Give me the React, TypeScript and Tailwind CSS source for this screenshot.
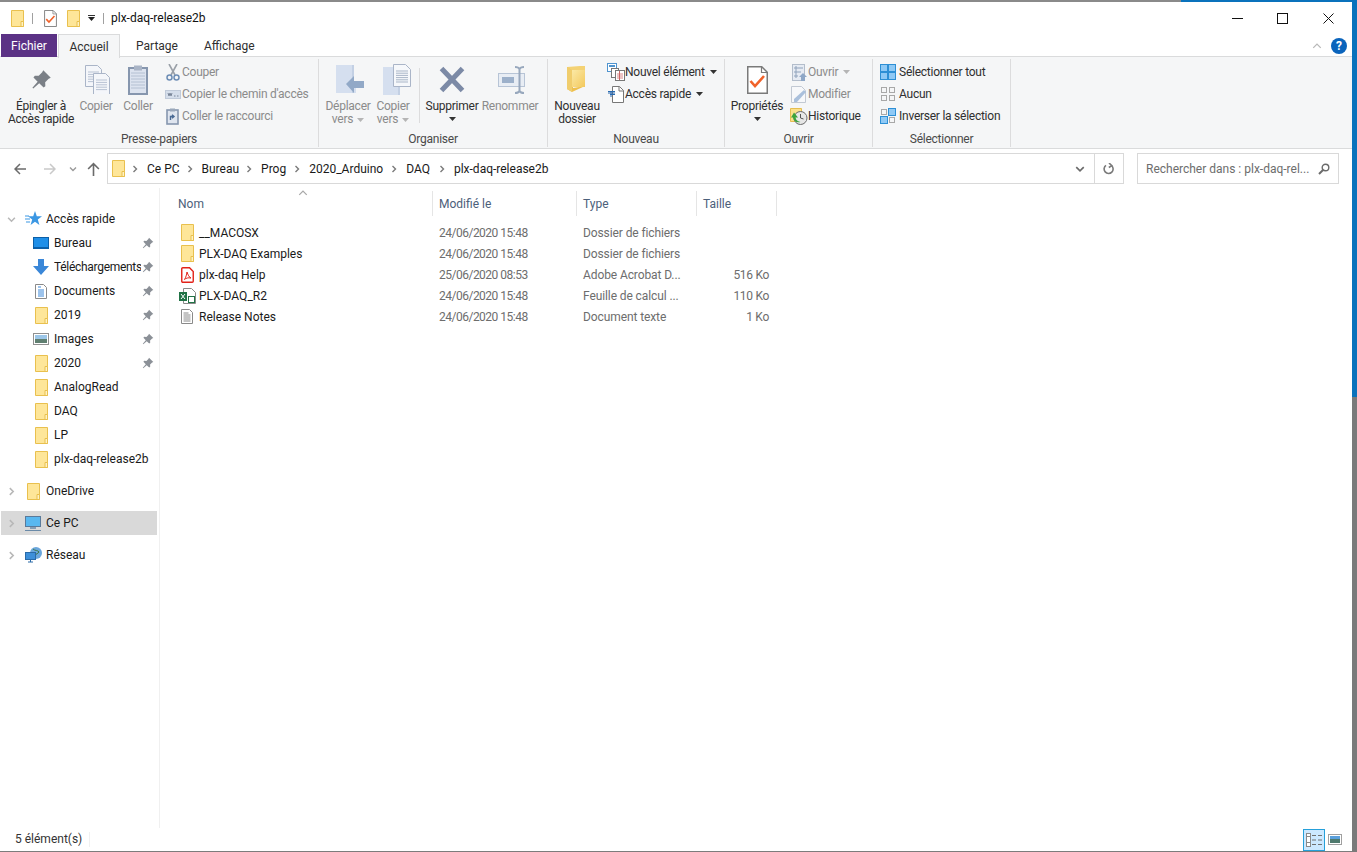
import React from "react";

const Folder = ({ w = 13, h = 17 }: { w?: number; h?: number }) => (
  <svg width={w} height={h} viewBox="0 0 13 17" className="shrink-0">
    <path d="M.5.5h12v16H.5z" fill="#fee699" stroke="#e9c04e" />
    <path d="M10 11.5h2.5v5H10z" fill="#fff3c4" stroke="#e9c04e" />
  </svg>
);

const PropsDoc = ({ w = 13, h = 17 }: { w?: number; h?: number }) => (
  <svg width={w} height={h} viewBox="0 0 21 28" className="shrink-0">
    <path d="M.75.75h14l5.5 5.5v21H.75z" fill="#fff" stroke="#7a7a7a" strokeWidth="1.5" />
    <path d="M14.5 1v5.5H20" fill="none" stroke="#7a7a7a" strokeWidth="1.2" />
    <path d="M3.5 15l4.5 5 9-10" fill="none" stroke="#f0622a" strokeWidth="2.6" />
  </svg>
);

const Chevron = ({ dir = "right", c = "#8a8a8a", s = 8, sw = 1.4 }: { dir?: string; c?: string; s?: number; sw?: number }) => {
  const d =
    dir === "right" ? "M2.5 1l3 3-3 3" : dir === "down" ? "M1 2.5l3 3 3-3" : "M1 5.5l3-3 3 3";
  return (
    <svg width={s} height={s} viewBox="0 0 8 8" className="shrink-0">
      <path d={d} fill="none" stroke={c} strokeWidth={sw} />
    </svg>
  );
};

const Caret = ({ c = "#333" }: { c?: string }) => (
  <svg width="7" height="4" viewBox="0 0 7 4" className="shrink-0">
    <path d="M0 0h7L3.5 4z" fill={c} />
  </svg>
);

const PinSmall = () => (
  <svg width="12" height="12" viewBox="0 0 12 12" className="shrink-0">
    <path d="M7 .7l4.3 4.3-1.2.6-2 2 .1 2.2-1 .8L4.7 8.2 1.3 11.2.8 10.7l3-3.4-2.4-2.5.8-1 2.2.1 2-2z" fill="#8b9097" />
  </svg>
);

const PinLarge = () => (
  <svg width="21" height="21" viewBox="0 0 12 12">
    <path d="M7 .7l4.3 4.3-1.2.6-2 2 .1 2.2-1 .8L4.7 8.2 1.3 11.2.8 10.7l3-3.4-2.4-2.5.8-1 2.2.1 2-2z" fill="#7b8087" />
  </svg>
);

const DocLines = ({ x, y, w, h }: { x: number; y: number; w: number; h: number }) => (
  <g>
    <path d={`M${x + 0.5} ${y + 0.5}h${w - 5}l4 4v${h - 4}h-${w - 1}z`} fill="#f4f6fa" stroke="#aab5c8" />
    {[0, 1, 2, 3, 4].map((i) => (
      <path key={i} d={`M${x + 3} ${y + 7 + i * 2.4}h${w - 6}`} stroke="#b8c2d3" strokeWidth="1" />
    ))}
  </g>
);

const CopyIcon = () => (
  <svg width="25" height="29" viewBox="0 0 25 29">
    <DocLines x={0} y={0} w={17} h={21} />
    <DocLines x={8} y={8} w={17} h={21} />
  </svg>
);

const PasteIcon = () => (
  <svg width="20" height="30" viewBox="0 0 20 30">
    <rect x="1" y="3" width="18" height="26" fill="#dce3ef" stroke="#8696ae" strokeWidth="2" />
    <rect x="6" y="0.5" width="8" height="5" fill="#a9b4c6" />
    {[8, 11, 14, 17, 20, 23].map((y) => (
      <path key={y} d={`M3 ${y}h14`} stroke="#b4c0d2" />
    ))}
  </svg>
);

const ScissorsIcon = () => (
  <svg width="14" height="17" viewBox="0 0 14 17">
    <path d="M3 0l6 11M11 0L5 11" stroke="#9aa0a8" strokeWidth="1.6" fill="none" />
    <circle cx="3.5" cy="13.5" r="2.5" fill="none" stroke="#6d8db5" strokeWidth="1.5" />
    <circle cx="10.5" cy="13.5" r="2.5" fill="none" stroke="#6d8db5" strokeWidth="1.5" />
  </svg>
);

const PathIcon = () => (
  <svg width="16" height="9" viewBox="0 0 16 9">
    <rect x="0.5" y="0.5" width="15" height="8" fill="#d5deeb" stroke="#c0cad9" />
    <path d="M3 3l1 3 1-3 1 3 1-3M9 6h1.5M12 6h1.5" stroke="#7a8699" fill="none" />
  </svg>
);

const ShortcutIcon = () => (
  <svg width="13" height="17" viewBox="0 0 13 17">
    <rect x="1" y="2" width="11" height="14" fill="#dfe5ef" stroke="#8696ae" strokeWidth="1.6" />
    <rect x="4" y="0.5" width="5" height="3" fill="#9aa7ba" />
    <path d="M4.5 12V8.5h3M6 6.8l2 1.7-2 1.7" stroke="#4a6a94" strokeWidth="1.4" fill="none" />
  </svg>
);

const MoveIcon = () => (
  <svg width="28" height="29" viewBox="0 0 28 29">
    <path d="M0 0h18v18l2 2v8H0z" fill="#d5dfef" />
    <path d="M16 0h2v28h-2z" fill="#c3d0e4" />
    <path d="M10 19l8-8v5h10v7H18v5z" fill="#92a9c7" />
  </svg>
);

const CopyToIcon = () => (
  <svg width="28" height="31" viewBox="0 0 28 31">
    <path d="M0 3h17v28H0z" fill="#d5dfef" />
    <path d="M15 3h2v28h-2z" fill="#c3d0e4" />
    <g>
      <path d="M10.500.5h12l5 5v17h-17z" fill="#f6f8fb" stroke="#aab5c8" />
      {[0, 1, 2, 3, 4, 5].map((i) => (
        <path key={i} d={`M13 ${7 + i * 2.2}h12`} stroke="#a9b5c7" />
      ))}
    </g>
  </svg>
);

const DeleteIcon = () => (
  <svg width="26" height="27" viewBox="0 0 26 27">
    <path d="M2.500 2.500l21 22M23.500 2.500l-21 22" stroke="#7c8aa6" strokeWidth="5" fill="none" />
  </svg>
);

const RenameIcon = () => (
  <svg width="29" height="28" viewBox="0 0 29 28">
    <rect x="0.5" y="7.500" width="26" height="13" fill="#e8edf4" stroke="#b7c4d6" />
    <rect x="4" y="11" width="12" height="6" fill="#9cb0ca" />
    <path d="M17 1c3 0 4 1 4.500 2C22 2 23 1 26 1M21.500 3v22M17 27c3 0 4-1 4.500-2 .5 1 1.500 2 4.500 2" stroke="#98a8bd" strokeWidth="2" fill="none" />
  </svg>
);

const BigFolder = () => (
  <svg width="20" height="28" viewBox="0 0 20 28">
    <defs>
      <linearGradient id="bf" x1="0" y1="0" x2="1" y2="1">
        <stop offset="0" stopColor="#fbe9a6" />
        <stop offset="1" stopColor="#f3c95d" />
      </linearGradient>
    </defs>
    <path d="M0 1l13-1h5v20H7z" fill="#f4d274" />
    <path d="M0 1l6 4v17l12-2-13 6-5-3z" fill="#eec050" />
    <path d="M5 4h13v17H5z" fill="url(#bf)" />
    <path d="M0 1l5 3v22l-5-3z" fill="#f0cd6d" />
  </svg>
);

const NewItemIcon = () => (
  <svg width="18" height="18" viewBox="0 0 18 18">
    <rect x="0.500" y="0.500" width="9" height="8" fill="#fff" stroke="#4f94cf" />
    <path d="M2 3h6" stroke="#4f94cf" strokeWidth="2" />
    <rect x="4.500" y="5.500" width="7" height="9" fill="#fff" stroke="#777" />
    <rect x="8.500" y="7.500" width="9" height="10" fill="#fff" stroke="#777" />
    <path d="M10 11h6M10 13h6M10 15h6" stroke="#d98a8a" />
    <path d="M12.500 8v9" stroke="#c66" />
  </svg>
);

const QuickIcon = () => (
  <svg width="16" height="17" viewBox="0 0 16 17">
    <path d="M4.500.5h7l4 4v12h-11z" fill="#fff" stroke="#777" />
    <path d="M11 .5v4.500h4.500" fill="none" stroke="#777" />
    <path d="M0 5.500h7M2 8.500h5M0 7h7M3 5v6" stroke="#2a6bb0" strokeWidth="1" />
  </svg>
);

const OpenIcon = () => (
  <svg width="15" height="17" viewBox="0 0 15 17">
    <rect x="0.500" y="0.500" width="12" height="16" fill="#e6ebf3" stroke="#b3bdcb" />
    <path d="M3 3h2v2H3zM3 7h2v2H3zM3 11h2v2H3zM6 4h5M6 8h3" stroke="#8fa2bb" fill="none" />
    <path d="M11 9l4 4h-2v4h-4v-4H7z" fill="#8ea7c7" />
  </svg>
);

const EditIcon = () => (
  <svg width="16" height="17" viewBox="0 0 16 17">
    <path d="M.5.500h10l4 4v12H.5z" fill="#f7f8fa" stroke="#c2c9d3" />
    <path d="M13 4l2 2-9 10H3v-3z" fill="#aac0dc" />
  </svg>
);

const HistoryIcon = () => (
  <svg width="18" height="17" viewBox="0 0 18 17">
    <path d="M.500.500h11v13H.5z" fill="#fbe08a" stroke="#e5bd50" />
    <circle cx="10.500" cy="10" r="6.500" fill="#e7e7e7" stroke="#6b6b6b" />
    <path d="M10.500 6v4l3 1" stroke="#555" fill="none" />
    <path d="M4 4.500l4 5H5.500c.5 3 3 4 5 4.500-4 1-7-1-7.500-4.500L1 9.500z" fill="#3da33d" />
  </svg>
);

const GridIcon = ({ on }: { on: boolean[] }) => (
  <svg width="16" height="16" viewBox="0 0 16 16" className="shrink-0 mr-[3px]">
    {[
      [0, 0],
      [8, 0],
      [0, 8],
      [8, 8],
    ].map(([x, y], i) => (
      <rect
        key={i}
        x={x + (on[i] ? 0.5 : 1.5)}
        y={y + (on[i] ? 0.5 : 1.5)}
        width={on[i] ? 7 : 5}
        height={on[i] ? 7 : 5}
        fill={on[i] ? "#8fc9f5" : "#f5f6f7"}
        stroke={on[i] ? "#2d8fd5" : "#a8a8a8"}
      />
    ))}
  </svg>
);

const SearchIcon = () => (
  <svg width="12" height="12" viewBox="0 0 12 12">
    <circle cx="7.500" cy="4.500" r="3.300" fill="none" stroke="#6b6b6b" strokeWidth="1.400" />
    <path d="M5 7L1 11" stroke="#6b6b6b" strokeWidth="2" />
  </svg>
);

const Large = ({
  w,
  ml = 0,
  icon,
  lines,
  dim,
  caret,
  iconPad = 0,
}: {
  w: number;
  ml?: number;
  icon: React.ReactNode;
  lines: React.ReactNode[];
  dim?: boolean;
  caret?: boolean;
  iconPad?: number;
}) => (
  <div
    className={`flex flex-col items-center shrink-0 leading-[13px] whitespace-nowrap ${dim ? "text-[#8b8b8b]" : "text-[#2f2f2f]"}`}
    style={{ width: w, marginLeft: ml }}
  >
    <div className="h-[41px] flex items-center justify-center" style={{ paddingLeft: iconPad }}>
      {icon}
    </div>
    {lines.map((l, i) => (
      <div key={i} className="flex items-center gap-1">
        {l}
      </div>
    ))}
    {caret && (
      <div className="mt-[4px]">
        <Caret />
      </div>
    )}
  </div>
);

const Small = ({
  icon,
  label,
  dim,
  caret,
  iw,
}: {
  icon: React.ReactNode;
  label: string;
  dim?: boolean;
  caret?: boolean;
  iw: number;
}) => (
  <div className={`h-[22px] flex items-center whitespace-nowrap ${dim ? "text-[#8b8b8b]" : "text-[#2f2f2f]"}`}>
    <div className="flex items-center justify-center shrink-0" style={{ width: iw }}>
      {icon}
    </div>
    <span>{label}</span>
    {caret && (
      <span className="ml-[5px]">
        <Caret c={dim ? "#b5b5b5" : "#333"} />
      </span>
    )}
  </div>
);

const Group = ({ w, label, children }: { w: number; label: string; children: React.ReactNode }) => (
  <div className="flex flex-col shrink-0 h-[88px] mt-[2px] border-r border-[#dcdcdd]" style={{ width: w }}>
    <div className="flex h-[73px] items-start">{children}</div>
    <div className="text-center text-[#4a4a4a] leading-[15px] mt-[1px]">{label}</div>
  </div>
);

const NavRow = ({
  icon,
  label,
  pin,
  indent,
  chev,
  active,
  mt,
  clip,
}: {
  icon: React.ReactNode;
  label: string;
  pin?: boolean;
  indent: number;
  chev?: "down" | "right";
  active?: boolean;
  mt?: number;
  clip?: boolean;
}) => (
  <div
    className={`h-[24px] flex items-center mr-[2px] ml-[1px] relative whitespace-nowrap text-[#1a1a1a] ${active ? "bg-[#d9d9d9]" : ""}`}
    style={{ marginTop: mt ?? 0 }}
  >
    {chev && (
      <span className="absolute left-[6px] top-[8px]">
        <Chevron dir={chev} c="#b8b8b8" s={9} />
      </span>
    )}
    <div className="flex items-center justify-center shrink-0" style={{ marginLeft: indent, width: 20 }}>
      {icon}
    </div>
    <span className={`ml-[3px] ${clip ? "w-[87px] overflow-hidden tracking-[-0.3px]" : ""}`}>{label}</span>
    {pin && (
      <span className="absolute left-[141px] top-[6px]">
        <PinSmall />
      </span>
    )}
  </div>
);

const FileRow = ({
  icon,
  name,
  date,
  type,
  size,
}: {
  icon: React.ReactNode;
  name: string;
  date: string;
  type: string;
  size: string;
}) => (
  <div className="h-[21px] flex items-center whitespace-nowrap">
    <div className="w-[24px] flex items-center justify-center shrink-0">{icon}</div>
    <div className="w-[240px] text-[#1a1a1a] shrink-0">{name}</div>
    <div className="w-[144px] text-[#6d6d6d] shrink-0 tracking-[-0.5px]">{date}</div>
    <div className="w-[120px] text-[#6d6d6d] shrink-0 tracking-[-0.1px]">{type}</div>
    <div className="w-[66px] text-[#6d6d6d] text-right shrink-0 tracking-[-0.3px]">{size}</div>
  </div>
);

const Col = ({ w, label }: { w: number; label: string }) => (
  <div className="h-[25px] flex items-center pl-[6px] border-r border-[#e5e5e5] text-[#4c607a] shrink-0" style={{ width: w }}>
    {label}
  </div>
);

const Crumb = ({ label, ml }: { label: string; ml: number }) => (
  <>
    <span style={{ marginLeft: ml }} className="shrink-0">
      <Chevron c="#7a7a7a" />
    </span>
    <span className="ml-[8px] text-[#1a1a1a] shrink-0">{label}</span>
  </>
);

export default function App() {
  return (
    <div
      className="w-[1357px] h-[852px] overflow-hidden flex flex-col bg-[#7c7c7c] text-[12px]"
      style={{ fontFamily: 'Roboto, "Liberation Sans", sans-serif' }}
    >
      <div className="h-[2px] flex shrink-0">
        <div className="w-[1181px] bg-[#8a8a8a]" />
        <div className="flex-1 bg-[#0a72bc]" />
      </div>
      <div className="flex flex-1 min-h-0">
        <div className="w-[1352px] flex flex-col bg-white mb-[1px] shrink-0">
          {/* Title bar */}
          <div className="h-[32px] flex items-center shrink-0 relative">
            <div className="ml-[11px] flex items-center">
              <Folder />
              <div className="w-px h-[11px] bg-[#a0a0a0] ml-[8px]" />
              <div className="ml-[11px]">
                <PropsDoc />
              </div>
              <div className="ml-[10px]">
                <Folder />
              </div>
              <div className="ml-[8px] flex flex-col items-center gap-[1px]">
                <div className="w-[7px] h-px bg-[#333]" />
                <Caret c="#222" />
              </div>
              <div className="w-px h-[11px] bg-[#a0a0a0] ml-[8px]" />
              <span className="ml-[7px] text-[#111] leading-none">plx-daq-release2b</span>
            </div>
            <div className="ml-auto flex items-center mr-[16px] gap-[34px]">
              <svg width="11" height="11" viewBox="0 0 11 11">
                <path d="M0 5.500h11" stroke="#111" />
              </svg>
              <svg width="11" height="11" viewBox="0 0 11 11">
                <rect x="0.500" y="0.500" width="10" height="10" fill="none" stroke="#111" />
              </svg>
              <svg width="11" height="11" viewBox="0 0 11 11" className="ml-[1px] mr-[2px]">
                <path d="M.5.5l10 10M10.500.5l-10 10" stroke="#111" />
              </svg>
            </div>
          </div>
          {/* Tabs */}
          <div className="h-[23px] flex shrink-0 items-stretch relative z-10 -mb-px">
            <div className="ml-[1px] w-[56px] bg-[#5b3285] text-white flex items-center justify-center">Fichier</div>
            <div className="ml-[1px] w-[62px] h-[24px] bg-[#f5f6f7] border border-b-0 border-[#dadbdc] flex items-center justify-center text-[#2f2f2f]">
              Accueil
            </div>
            <div className="ml-[16px] flex items-center text-[#2f2f2f]">Partage</div>
            <div className="ml-[26px] flex items-center text-[#2f2f2f]">Affichage</div>
            <div className="ml-auto flex items-center mr-[4px] gap-[9px]">
              <Chevron dir="up" c="#b8b8b8" s={10} sw={1} />
              <div className="w-[16px] h-[16px] rounded-full bg-[#0a64bc] text-white font-bold text-[12px] flex items-center justify-center mr-[1px]">
                ?
              </div>
            </div>
          </div>
          {/* Ribbon */}
          <div className="h-[93px] bg-[#f5f6f7] border-y border-[#dadbdc] flex shrink-0 tracking-[-0.25px]">
            <Group w={319} label="Presse-papiers">
              <Large w={66} ml={8} icon={<PinLarge />} lines={["Épingler à", "Accès rapide"]} />
              <Large w={36} ml={4} dim icon={<CopyIcon />} iconPad={2} lines={["Copier"]} />
              <Large w={36} ml={6} dim icon={<PasteIcon />} lines={["Coller"]} />
              <div className="ml-[7px] mt-[2px]">
                <Small dim iw={19} icon={<ScissorsIcon />} label="Couper" />
                <Small dim iw={19} icon={<PathIcon />} label="Copier le chemin d'accès" />
                <Small dim iw={19} icon={<ShortcutIcon />} label="Coller le raccourci" />
              </div>
            </Group>
            <Group w={229} label="Organiser">
              <Large
                w={46}
                ml={6}
                dim
                icon={<MoveIcon />}
                iconPad={4}
                lines={[
                  "Déplacer",
                  <>
                    vers <Caret c="#b5b5b5" />
                  </>,
                ]}
              />
              <Large
                w={36}
                ml={4}
                dim
                icon={<CopyToIcon />}
                iconPad={8}
                lines={[
                  "Copier",
                  <>
                    vers <Caret c="#b5b5b5" />
                  </>,
                ]}
              />
              <div className="w-px h-[55px] bg-[#dcdcdd] ml-[8px] mt-[9px] shrink-0" />
              <Large w={54} ml={5} icon={<DeleteIcon />} lines={["Supprimer"]} caret />
              <Large w={56} ml={3} dim icon={<RenameIcon />} iconPad={4} lines={["Renommer"]} />
            </Group>
            <Group w={177} label="Nouveau">
              <Large w={48} ml={5} icon={<BigFolder />} iconPad={0} lines={["Nouveau", "dossier"]} />
              <div className="ml-[5px] mt-[2px]">
                <Small iw={19} caret icon={<NewItemIcon />} label="Nouvel élément" />
                <Small iw={19} caret icon={<QuickIcon />} label="Accès rapide" />
              </div>
            </Group>
            <Group w={148} label="Ouvrir">
              <Large w={52} ml={6} icon={<PropsDoc w={21} h={28} />} lines={["Propriétés"]} caret />
              <div className="ml-[7px] mt-[2px]">
                <Small dim iw={18} caret icon={<OpenIcon />} label="Ouvrir" />
                <Small dim iw={18} icon={<EditIcon />} label="Modifier" />
                <Small iw={18} icon={<HistoryIcon />} label="Historique" />
              </div>
            </Group>
            <Group w={138} label="Sélectionner">
              <div className="ml-[7px] mt-[2px]">
                <Small iw={19} icon={<GridIcon on={[true, true, true, true]} />} label="Sélectionner tout" />
                <Small iw={19} icon={<GridIcon on={[false, false, false, false]} />} label="Aucun" />
                <Small iw={19} icon={<GridIcon on={[false, true, true, false]} />} label="Inverser la sélection" />
              </div>
            </Group>
          </div>
          {/* Address row */}
          <div className="h-[39px] flex items-center shrink-0">
            <div className="ml-[14px] w-[12px]">
              <svg width="12" height="12" viewBox="0 0 12 12">
                <path d="M6 1L1 6l5 5M1 6h11" fill="none" stroke="#6b6b6b" strokeWidth="1.500" />
              </svg>
            </div>
            <div className="ml-[18px] w-[12px]">
              <svg width="12" height="12" viewBox="0 0 12 12">
                <path d="M6 1l5 5-5 5M11 6H0" fill="none" stroke="#c9c9c9" strokeWidth="1.500" />
              </svg>
            </div>
            <div className="ml-[13px]">
              <Chevron dir="down" c="#9a9a9a" />
            </div>
            <div className="ml-[10px]">
              <svg width="13" height="14" viewBox="0 0 12 13">
                <path d="M1 6.500L6 1.500l5 5M6 2v11" fill="none" stroke="#6b6b6b" strokeWidth="1.500" />
              </svg>
            </div>
            <div className="ml-[7px] w-[1017px] h-[31px] border border-[#d9d9d9] flex items-center shrink-0">
              <div className="ml-[4px]">
                <Folder />
              </div>
              <Crumb label="Ce PC" ml={6} />
              <Crumb label="Bureau" ml={6} />
              <Crumb label="Prog" ml={6} />
              <Crumb label="2020_Arduino" ml={7} />
              <Crumb label="DAQ" ml={7} />
              <Crumb label="plx-daq-release2b" ml={8} />
              <div className="ml-auto flex items-center h-full">
                <span className="mr-[9px]">
                  <Chevron dir="down" c="#6b6b6b" s={10} sw={1.3} />
                </span>
                <div className="w-[29px] h-full border-l border-[#d9d9d9] flex items-center justify-center">
                  <svg width="12" height="12" viewBox="0 0 12 12">
                    <path d="M8.500 2.500A4.500 4.500 0 1 1 3 2.300M6 0L8.800 2.600 5.800 4.500" fill="none" stroke="#7a7a7a" strokeWidth="1.600" />
                  </svg>
                </div>
              </div>
            </div>
            <div className="ml-[13px] w-[202px] h-[31px] border border-[#d9d9d9] flex items-center pl-[8px] shrink-0">
              <span className="text-[#6d6d6d] whitespace-nowrap">Rechercher dans : plx-daq-rel...</span>
              <span className="ml-auto mr-[8px]">
                <SearchIcon />
              </span>
            </div>
          </div>
          {/* Main */}
          <div className="flex flex-1 min-h-0">
            <div className="w-[160px] border-r border-[#f0f0f0] pt-[19px] shrink-0">
              <NavRow
                chev="down"
                indent={22}
                label="Accès rapide"
                icon={
                  <svg width="17" height="16" viewBox="0 0 17 16">
                    <path d="M10 0l1.800 5.200H17l-4.200 3.300 1.600 5.500L10 10.700 5.600 14l1.600-5.500L3 5.200h5.200z" fill="#3b97e3" />
                    <path d="M0 5h4M0 8h5M1 11h4" stroke="#3b97e3" />
                  </svg>
                }
              />
              <NavRow
                pin
                indent={30}
                label="Bureau"
                icon={
                  <svg width="16" height="12" viewBox="0 0 16 12">
                    <rect x="0.500" y="0.500" width="15" height="11" fill="#1f8fe8" stroke="#0b5fa8" />
                    <path d="M1 10.500h14" stroke="#0b5fa8" />
                  </svg>
                }
              />
              <NavRow
                pin
                clip
                indent={30}
                label="Téléchargements"
                icon={
                  <svg width="16" height="16" viewBox="0 0 16 16">
                    <path d="M5 0h6v7h5l-8 9-8-9h5z" fill="#3a87d8" />
                  </svg>
                }
              />
              <NavRow
                pin
                indent={30}
                label="Documents"
                icon={
                  <svg width="12" height="15" viewBox="0 0 12 15">
                    <path d="M.5.5h8l3 3v11H.5z" fill="#fff" stroke="#8a8a8a" />
                    <path d="M3 3h3M3 6h6M3 8h6M3 10h6M3 12h6" stroke="#3a87d8" />
                  </svg>
                }
              />
              <NavRow pin indent={30} label="2019" icon={<Folder />} />
              <NavRow
                pin
                indent={30}
                label="Images"
                icon={
                  <svg width="16" height="12" viewBox="0 0 16 12">
                    <rect x="0.500" y="0.500" width="15" height="11" fill="#fff" stroke="#909090" />
                    <rect x="2" y="2" width="12" height="4" fill="#9cc6e8" />
                    <path d="M2 6h12v4H2z" fill="#5f7f70" />
                  </svg>
                }
              />
              <NavRow pin indent={30} label="2020" icon={<Folder />} />
              <NavRow indent={30} label="AnalogRead" icon={<Folder />} />
              <NavRow indent={30} label="DAQ" icon={<Folder />} />
              <NavRow indent={30} label="LP" icon={<Folder />} />
              <NavRow indent={30} label="plx-daq-release2b" icon={<Folder />} />
              <NavRow mt={8} chev="right" indent={22} label="OneDrive" icon={<Folder />} />
              <NavRow
                mt={8}
                active
                chev="right"
                indent={22}
                label="Ce PC"
                icon={
                  <svg width="16" height="15" viewBox="0 0 16 15">
                    <rect x="0.500" y="0.500" width="15" height="10" fill="#59b8f0" stroke="#5a7a9a" />
                    <path d="M5 12h6" stroke="#6a8aa8" strokeWidth="1.500" />
                    <path d="M0 14.500h16" stroke="#6a8aa8" />
                  </svg>
                }
              />
              <NavRow
                mt={8}
                chev="right"
                indent={22}
                label="Réseau"
                icon={
                  <svg width="17" height="16" viewBox="0 0 17 16">
                    <circle cx="11" cy="6" r="6" fill="#6aa6dc" />
                    <path d="M8 2c2 2 5 1 6 3-1 2-3 1-4 4" stroke="#3f7a4a" fill="none" />
                    <rect x="0.500" y="5.500" width="10" height="7" fill="#3d8fd9" stroke="#2a6aa8" />
                    <path d="M3 15h5M5.500 13v2" stroke="#2a6aa8" />
                  </svg>
                }
              />
            </div>
            <div className="flex-1 pl-[12px] pt-[3px] relative min-w-0">
              <span className="absolute left-[138px] top-0">
                <Chevron dir="up" c="#a8a8a8" s={10} sw={1} />
              </span>
              <div className="flex">
                <Col w={261} label="Nom" />
                <Col w={144} label="Modifié le" />
                <Col w={120} label="Type" />
                <Col w={80} label="Taille" />
              </div>
              <div className="mt-[6px] ml-[3px]">
                <FileRow icon={<Folder />} name="__MACOSX" date="24/06/2020 15:48" type="Dossier de fichiers" size="" />
                <FileRow icon={<Folder />} name="PLX-DAQ Examples" date="24/06/2020 15:48" type="Dossier de fichiers" size="" />
                <FileRow
                  icon={
                    <svg width="13" height="16" viewBox="0 0 13 16">
                      <path d="M.75 1.750a1 1 0 0 1 1-1h6.750l3.750 3.750v9.750a1 1 0 0 1-1 1h-9.500a1 1 0 0 1-1-1z" fill="#fff" stroke="#e2231a" strokeWidth="1.400" />
                      <path d="M6 5c1 3 2 5 4 6-3-.5-5 0-6.500 1.500C5 10 5.500 8 6 5z" fill="none" stroke="#e2231a" />
                    </svg>
                  }
                  name="plx-daq Help"
                  date="25/06/2020 08:53"
                  type="Adobe Acrobat D..."
                  size="516 Ko"
                />
                <FileRow
                  icon={
                    <svg width="17" height="16" viewBox="0 0 17 16">
                      <path d="M4.500.5h8l4 4v11h-12z" fill="#fff" stroke="#8a8a8a" />
                      <rect x="9.500" y="8.500" width="6" height="6" fill="#fff" stroke="#217346" />
                      <rect x="0" y="4" width="8" height="9" fill="#217346" />
                      <path d="M2 6l4 5M6 6l-4 5" stroke="#fff" />
                    </svg>
                  }
                  name="PLX-DAQ_R2"
                  date="24/06/2020 15:48"
                  type="Feuille de calcul ..."
                  size="110 Ko"
                />
                <FileRow
                  icon={
                    <svg width="12" height="15" viewBox="0 0 12 15">
                      <path d="M.5.5h8l3 3v11H.5z" fill="#fff" stroke="#8a8a8a" />
                      <path d="M2.500 4h5M2.500 6h7M2.500 8h7M2.500 10h7M2.500 12h7" stroke="#8a8a8a" />
                    </svg>
                  }
                  name="Release Notes"
                  date="24/06/2020 15:48"
                  type="Document texte"
                  size="1 Ko"
                />
              </div>
            </div>
          </div>
          {/* Status */}
          <div className="h-[23px] flex items-center shrink-0 text-[#333]">
            <div className="ml-[15px] w-[75px] h-[15px] border-r border-[#f0f0f0] leading-[15px] whitespace-nowrap">5 élément(s)</div>
            <div className="ml-auto mr-[10px] flex items-center gap-[3px]">
              <div className="w-[22px] h-[22px] bg-[#cce8ff] border border-[#26a0da] flex items-center justify-center">
                <svg width="16" height="14" viewBox="0 0 16 14">
                  <rect x="0.500" y="0.500" width="4" height="13" fill="#fff" stroke="#8a8a8a" />
                  <path d="M1 3.500h3M1 9.500h3" stroke="#8a8a8a" />
                  <path d="M6 2.500h4M12 2.500h4M6 7h4M12 7h4M6 11.500h4M12 11.500h4" stroke="#707070" />
                </svg>
              </div>
              <svg width="14" height="11" viewBox="0 0 14 11">
                <rect x="0.500" y="0.500" width="13" height="10" fill="#fff" stroke="#a0a0a0" />
                <rect x="2" y="2" width="10" height="3" fill="#5aa0dc" />
                <rect x="2" y="5" width="10" height="4" fill="#4f7a6e" />
              </svg>
            </div>
          </div>
        </div>
        <div className="flex-1 flex flex-col">
          <div className="h-[395px] bg-[#0a72bc]" />
          <div className="flex-1 bg-[#7a7a7a]" />
        </div>
      </div>
    </div>
  );
}
